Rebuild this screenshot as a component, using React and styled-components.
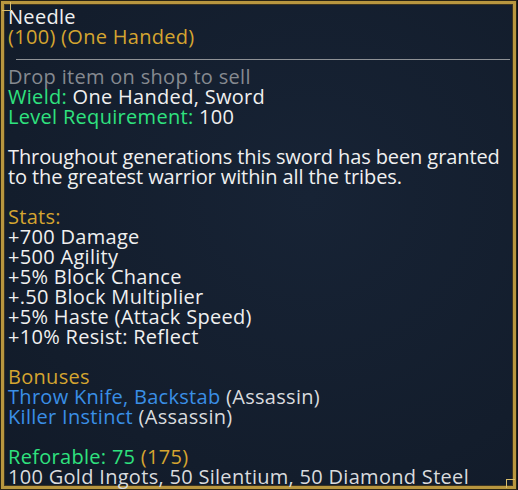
import React from "react";
import styled, { createGlobalStyle } from "styled-components";

const Global = createGlobalStyle`
  html, body { margin: 0; padding: 0; background: #0c121b; }
  body { width: 518px; height: 490px; overflow: hidden; }
`;

const Frame = styled.div`
  position: relative;
  box-sizing: border-box;
  margin: 1px 0 0 1px;
  width: 515px;
  height: 488px;
  border: 3px solid #b8963f;
  box-shadow: inset 0 0 0 1px #3d3420, 0 0 0 1px #2a2414;
  background: radial-gradient(ellipse at 60% 40%, #172335 0%, #131d2c 70%, #111a28 100%);
  padding: 3px 0 0 4px;
  font-family: "Open Sans", sans-serif;
  font-size: 20px;
  line-height: 20px;
  letter-spacing: 0.3px;
  color: #f0f0f0;
  &::before, &::after {
    content: "";
    position: absolute;
    width: 8px;
    height: 8px;
    border: 1px solid #d9bd6c;
  }
  &::before { top: -2px; left: -2px; border-width: 0 1px 1px 0; }
  &::after { bottom: -2px; right: -2px; border-width: 1px 0 0 1px; }
`;

const Line = styled.div`
  white-space: nowrap;
  color: ${(p) => p.$c || "#f0f0f0"};
`;

const Description = styled.div`
  white-space: nowrap;
  letter-spacing: -0.1px;
  color: #f0f0f0;
`;

const Span = styled.span`
  color: ${(p) => p.$c};
`;

const Gap = styled.div`
  height: 20px;
`;

const Rule = styled.hr`
  border: 0;
  height: 1px;
  background: #8f9296;
  margin: 12px 0 7px 8px;
  width: 494px;
`;

const GOLD = "#d5a530";
const GREEN = "#2fe27f";
const BLUE = "#3a8fe6";
const GREY = "#868a90";
const LIGHT = "#d9dbde";

export default function App() {
  return (
    <>
      <Global />
      <Frame>
        <Line>Needle</Line>
        <Line $c={GOLD}>(100) (One Handed)</Line>
        <Rule />
        <Line $c={GREY}>Drop item on shop to sell</Line>
        <Line>
          <Span $c={GREEN}>Wield:</Span> One Handed, Sword
        </Line>
        <Line>
          <Span $c={GREEN}>Level Requirement:</Span> 100
        </Line>
        <Gap />
        <Description>Throughout generations this sword has been granted</Description>
        <Description>to the greatest warrior within all the tribes.</Description>
        <Gap />
        <Line $c={GOLD}>Stats:</Line>
        <Line>+700 Damage</Line>
        <Line>+500 Agility</Line>
        <Line>+5% Block Chance</Line>
        <Line>+.50 Block Multiplier</Line>
        <Line>+5% Haste (Attack Speed)</Line>
        <Line>+10% Resist: Reflect</Line>
        <Gap />
        <Line $c={GOLD}>Bonuses</Line>
        <Line>
          <Span $c={BLUE}>Throw Knife, Backstab</Span> <Span $c={LIGHT}>(Assassin)</Span>
        </Line>
        <Line>
          <Span $c={BLUE}>Killer Instinct</Span> <Span $c={LIGHT}>(Assassin)</Span>
        </Line>
        <Gap />
        <Line>
          <Span $c={GREEN}>Reforable: 75</Span> <Span $c={GOLD}>(175)</Span>
        </Line>
        <Line $c={LIGHT}>100 Gold Ingots, 50 Silentium, 50 Diamond Steel</Line>
      </Frame>
    </>
  );
}
